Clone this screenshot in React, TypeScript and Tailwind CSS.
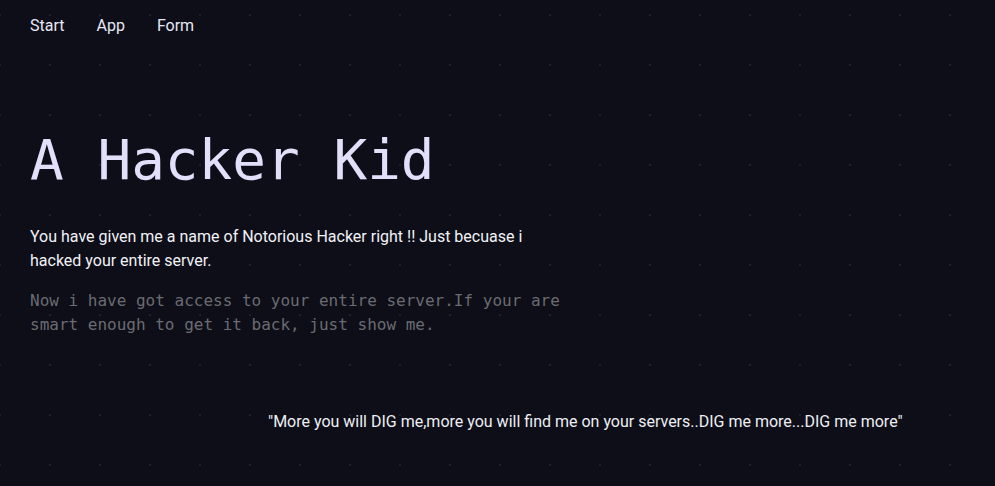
import React from 'react';

export default function App() {
  const links = ['Start', 'App', 'Form'];

  return (
    <div className="min-h-[486px] w-full bg-[#0d0e17] bg-[radial-gradient(circle,#1e1f2c_1px,transparent_1.5px)] bg-[size:50px_50px] bg-[position:-25px_-10px] font-['Roboto',sans-serif] text-[#eeeef5]">
      <nav className="flex gap-8 px-[30px] pt-[16px] text-base leading-5">
        {links.map((l) => (
          <a key={l} href="#" className="text-[#e6e8f5]">
            {l}
          </a>
        ))}
      </nav>

      <main className="px-[30px] pt-[89px]">
        <h1 className="font-['DejaVu_Sans_Mono',monospace] text-[56px] leading-[70px] text-[#e2dffb]">
          A Hacker Kid
        </h1>
        <p className="mt-[30px] w-[520px] text-base leading-6 text-[#f2f2f7]">
          You have given me a name of Notorious Hacker right !! Just becuase i hacked your entire server.
        </p>
        <p className="mt-[16px] w-[564px] font-['DejaVu_Sans_Mono',monospace] text-base leading-6 text-[#6b6b72]">
          Now i have got access to your entire server.If your are smart enough to get it back, just show me.
        </p>
        <p className="mt-[73px] pl-[238px] text-base leading-6 text-[#eeeef5]">
          "More you will DIG me,more you will find me on your servers..DIG me more...DIG me more"
        </p>
      </main>
    </div>
  );
}
